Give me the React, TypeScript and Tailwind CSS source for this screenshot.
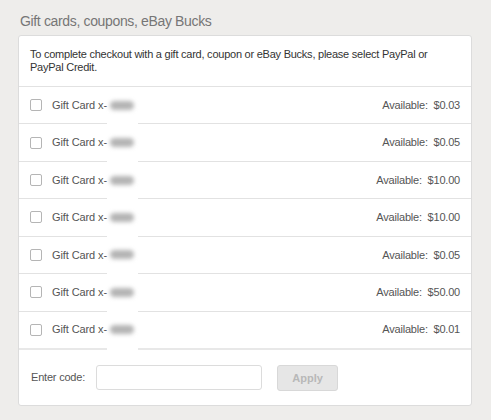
import { useState } from 'react'

type GiftCard = { id: string; amount: string }

const CARDS: GiftCard[] = [
  { id: 'a', amount: '$0.03' },
  { id: 'b', amount: '$0.05' },
  { id: 'c', amount: '$10.00' },
  { id: 'd', amount: '$10.00' },
  { id: 'e', amount: '$0.05' },
  { id: 'f', amount: '$50.00' },
  { id: 'g', amount: '$0.01' },
]

export default function App() {
  const [checked, setChecked] = useState<Record<string, boolean>>({})
  const [code, setCode] = useState('')

  return (
    <div
      className="min-h-[420px] w-full bg-[#eeedeb] pl-[18px] pr-[20px] pt-[12px]"
      style={{ fontFamily: '"Liberation Sans", Arial, sans-serif' }}
    >
      <h2 className="pl-[2px] text-[14px] leading-[18px] tracking-[-0.35px] text-[#767676]">
        Gift cards, coupons, eBay Bucks
      </h2>

      <div className="relative mt-[5px] w-[454px] rounded-[3px] border border-[#dcdcdc] bg-white">
        <p className="px-[11px] pb-[12px] pt-[12px] text-[11px] leading-[13px] tracking-[-0.24px] text-[#333]">
          To complete checkout with a gift card, coupon or eBay Bucks, please select PayPal or
          PayPal Credit.
        </p>

        {/* masked card numbers sit over the row dividers */}
        <div className="pointer-events-none absolute left-[88px] top-[51px] z-10 h-[263px] w-[31px] bg-white" />

        <ul>
          {CARDS.map((c) => (
            <li
              key={c.id}
              className="flex h-[37.43px] items-center border-t border-[#e2e2e2] pl-[11px] pr-[11px] text-[11px] tracking-[-0.1px] text-[#555]"
            >
              <button
                onClick={() => setChecked((s) => ({ ...s, [c.id]: !s[c.id] }))}
                className="h-[12px] w-[12px] rounded-[2px] border border-[#b5b5b5] bg-white"
              />
              <span className="relative z-20 ml-[10px]">Gift Card x-</span>
              <span className="relative z-20 ml-[3px] h-[9px] w-[24px] rounded-full bg-[#b4b4b4] blur-[2px]" />
              <span className="ml-auto whitespace-pre tracking-[-0.2px]">Available:  {c.amount}</span>
            </li>
          ))}
        </ul>

        <div className="flex h-[57px] items-center border-t-2 border-[#e8e8e8] pl-[12px]">
          <span className="text-[11px] tracking-[-0.2px] text-[#555]">Enter code:</span>
          <input
            value={code}
            onChange={(e) => setCode(e.target.value)}
            className="ml-[11px] mt-[1px] h-[25px] w-[166px] rounded-[3px] border border-[#dcdcdc] bg-white px-2 text-[11px] outline-none"
          />
          <button
            disabled
            className="ml-[15px] mt-[1px] h-[26px] w-[61px] rounded-[3px] border border-[#d8d8d8] bg-[#e6e6e6] text-[11px] font-bold text-[#b8b8b8]"
          >
            Apply
          </button>
        </div>
      </div>
    </div>
  )
}
